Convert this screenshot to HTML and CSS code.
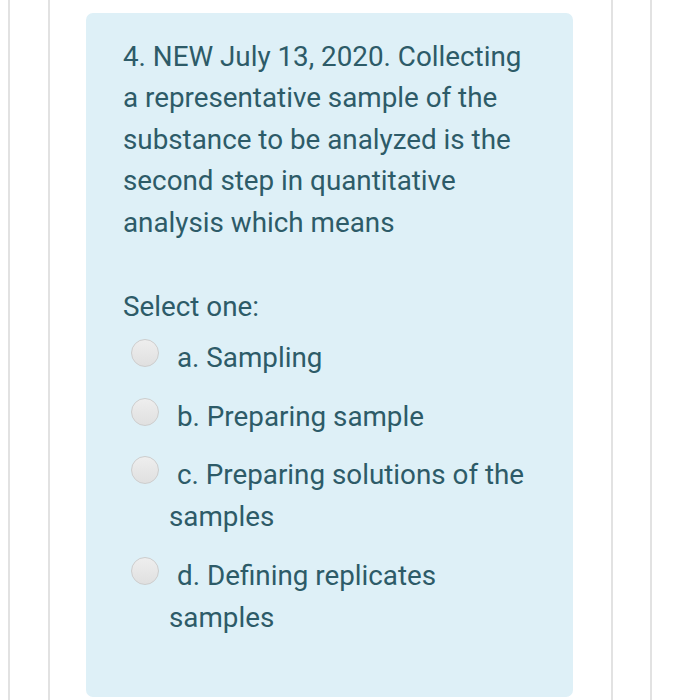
FILE: index.html
```html
<!DOCTYPE html>
<html>
<head>
<meta charset="utf-8">
<link rel="stylesheet" href="styles.css">
</head>
<body>
<div class="outer">
  <div class="inner">
    <div class="card">
      <p class="question">4. NEW July 13, 2020. Collecting a representative sample of the substance to be analyzed is the second step in quantitative analysis which means</p>
      <p class="prompt">Select one:</p>
      <div class="answers">
        <div class="option"><span class="radio"></span>a. Sampling</div>
        <div class="option"><span class="radio"></span>b. Preparing sample</div>
        <div class="option"><span class="radio"></span>c. Preparing solutions of the samples</div>
        <div class="option"><span class="radio"></span>d. Defining replicates samples</div>
      </div>
    </div>
  </div>
</div>
</body>
</html>
```
FILE: styles.css
```css
html, body {
  margin: 0;
  padding: 0;
  background: #ffffff;
}
.outer {
  margin-left: 8px;
  width: 644px;
  height: 700px;
  box-sizing: border-box;
  border-left: 2px solid #e2e2e2;
  border-right: 2px solid #e2e2e2;
  overflow: hidden;
}
.inner {
  margin-left: 38px;
  width: 565px;
  height: 700px;
  box-sizing: border-box;
  border-left: 2px solid #e2e2e2;
  border-right: 2px solid #e2e2e2;
  padding-top: 13px;
}
.card {
  margin-left: 36px;
  width: 487px;
  height: 684px;
  box-sizing: border-box;
  background: #def0f7;
  border-radius: 7px;
  padding: 23px 36px 0 37px;
  font-family: Roboto, "Liberation Sans", sans-serif;
  font-size: 27.8px;
  line-height: 41.4px;
  color: #2d5b68;
}
.question {
  margin: 0;
}
.prompt {
  margin: 43px 0 0 0;
}
.answers {
  margin-top: 10px;
}
.option {
  margin-left: 46px;
  margin-bottom: 16.5px;
  line-height: 42px;
}
.radio {
  display: inline-block;
  width: 28px;
  height: 28px;
  box-sizing: border-box;
  border-radius: 50%;
  border: 1px solid #cdcdcd;
  background: linear-gradient(#eeeeee, #e0e0e0);
  margin-left: -38px;
  margin-right: 18px;
  vertical-align: 0;
}
```
